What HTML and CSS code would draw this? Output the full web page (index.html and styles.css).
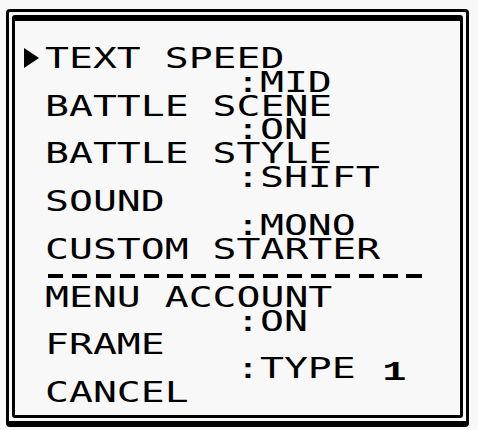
FILE: index.html
```html
<!DOCTYPE html>
<html lang="en">
<head>
    <meta charset="UTF-8">
    <meta name="viewport" content="width=device-width, initial-scale=1.0">
    <title>Options</title>
    <link rel="stylesheet" href="styles.css">
</head>
<body>
    <div class="frame">
        <div class="panel">
            <ul class="options">
                <li class="row selected"><i class="cursor"></i><span class="txt">TEXT SPEED</span></li>
                <li class="row val"><span class="txt">:MID</span></li>
                <li class="row"><span class="txt">BATTLE SCENE</span></li>
                <li class="row val"><span class="txt">:ON</span></li>
                <li class="row"><span class="txt">BATTLE STYLE</span></li>
                <li class="row val"><span class="txt">:SHIFT</span></li>
                <li class="row"><span class="txt">SOUND</span></li>
                <li class="row val"><span class="txt">:MONO</span></li>
                <li class="row"><span class="txt">CUSTOM STARTER</span></li>
                <li class="row rule"><span class="dashes"></span></li>
                <li class="row"><span class="txt">MENU ACCOUNT</span></li>
                <li class="row val"><span class="txt">:ON</span></li>
                <li class="row"><span class="txt">FRAME</span></li>
                <li class="row val"><span class="txt">:TYPE <b class="num">1</b></span></li>
                <li class="row"><span class="txt">CANCEL</span></li>
            </ul>
        </div>
    </div>
</body>
</html>
```

FILE: styles.css
```css
body {
    margin: 0;
    width: 478px;
    height: 430px;
    background-color: #f8f8f8;
    color: #000;
    font-family: "DejaVu Sans Mono", monospace;
    overflow: hidden;
}

/* outer window border: thin sides, heavy bottom */
.frame {
    box-sizing: border-box;
    width: 463px;
    height: 418px;
    margin: 9px 0 0 6px;
    padding: 3px;
    border: 3px solid #000;
    border-bottom-width: 6px;
    border-radius: 4px;
}

/* inner window border: heavy top, thin sides */
.panel {
    box-sizing: border-box;
    height: 100%;
    border: 3px solid #000;
    border-top-width: 6px;
    border-radius: 3px;
}

.options {
    list-style: none;
    margin: 0;
    padding: 25.8px 0 0 6px;
}

/* one text line = one 8px tile row */
.row {
    display: flex;
    align-items: flex-start;
    height: 23.9px;
    padding-left: 23.9px;
    font-size: 28px;
    line-height: 23.9px;
    white-space: pre;
}

.row.val {
    padding-left: 215.1px;
}

.txt {
    display: inline-block;
    transform: scaleX(1.42);
    transform-origin: 0 0;
}

.cursor {
    display: inline-block;
    width: 0;
    height: 0;
    margin: 1px 0 0 -21px;
    margin-right: 6px;
    border-left: 15px solid #000;
    border-top: 10.5px solid transparent;
    border-bottom: 10.5px solid transparent;
}

.num {
    font-family: "Liberation Mono", monospace;
    font-weight: bold;
    font-size: 28px;
    margin-left: 2px;
    vertical-align: -2px;
}

.dashes {
    display: block;
    width: 382.4px;
    height: 4px;
    margin: 12px 0 0 3px;
    background: repeating-linear-gradient(to right, #000 0 15px, transparent 15px 23.9px);
}
```
